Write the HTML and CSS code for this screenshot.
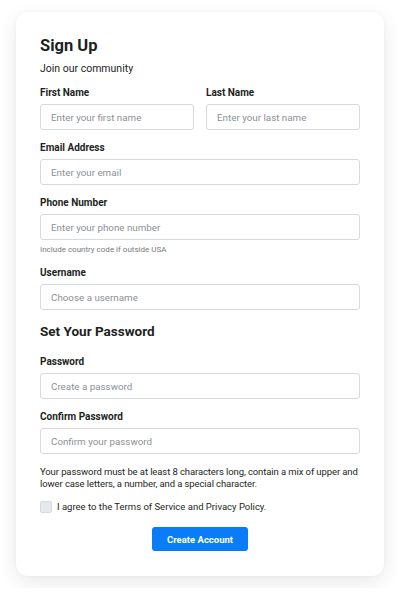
FILE: index.html
```html
<!DOCTYPE html>
<html lang="en">
<head>
  <meta charset="UTF-8">
  <title>Sign Up</title>
  <link rel="stylesheet" href="styles.css">
</head>
<body>
  <form class="signup-card" onsubmit="return false;">
    <h1 class="title">Sign Up</h1>
    <p class="subtitle">Join our community</p>

    <div class="row">
      <div class="field">
        <label for="first-name">First Name</label>
        <input type="text" id="first-name" placeholder="Enter your first name">
      </div>
      <div class="field">
        <label for="last-name">Last Name</label>
        <input type="text" id="last-name" placeholder="Enter your last name">
      </div>
    </div>

    <div class="field">
      <label for="email">Email Address</label>
      <input type="email" id="email" placeholder="Enter your email">
    </div>

    <div class="field">
      <label for="phone">Phone Number</label>
      <input type="tel" id="phone" placeholder="Enter your phone number">
      <small class="hint">Include country code if outside USA</small>
    </div>

    <div class="field">
      <label for="username">Username</label>
      <input type="text" id="username" placeholder="Choose a username">
    </div>

    <h2 class="section-title">Set Your Password</h2>

    <div class="field">
      <label for="password">Password</label>
      <input type="password" id="password" placeholder="Create a password">
    </div>

    <div class="field">
      <label for="confirm">Confirm Password</label>
      <input type="password" id="confirm" placeholder="Confirm your password">
    </div>

    <p class="rules">Your password must be at least 8 characters long, contain a mix of upper and lower case letters, a number, and a special character.</p>

    <label class="agree">
      <input type="checkbox" id="terms">
      <span>I agree to the Terms of Service and Privacy Policy.</span>
    </label>

    <div class="actions">
      <button type="submit" class="submit-btn">Create Account</button>
    </div>
  </form>
</body>
</html>
```

FILE: styles.css
```css
body {
  margin: 0;
  background: #fff;
  font-family: Roboto, 'Noto Sans', Arial, sans-serif;
  color: #1d1f22;
}
.signup-card {
  margin: 12px 16px;
  padding: 24px 24px 25px 24px;
  background: #fff;
  border-radius: 12px;
  box-shadow: 0 6px 20px rgba(0,0,0,0.09), 0 0 4px rgba(0,0,0,0.03);
}
.title {
  margin: 0;
  font-size: 16.5px;
  line-height: 20px;
  font-weight: 700;
}
.subtitle {
  margin: 6px 0 11px 0;
  font-size: 10.5px;
  line-height: 14px;
}
.row {
  display: flex;
  gap: 12px;
}
.row .field {
  flex: 1;
}
.field {
  display: flex;
  flex-direction: column;
  margin-bottom: 12px;
}
.field label {
  font-size: 10px;
  line-height: 12px;
  font-weight: 700;
  margin-bottom: 5px;
}
.field input {
  box-sizing: border-box;
  width: 100%;
  height: 26px;
  padding: 0 10px;
  border: 1px solid #d6d9dd;
  border-radius: 3px;
  font-family: inherit;
  font-size: 9.8px;
  color: #1d1f22;
  background: #fff;
  outline: none;
}
.field input::placeholder {
  color: #8d9196;
}
.hint {
  margin-top: 5px;
  font-size: 8px;
  line-height: 10px;
  color: #777b80;
}
.section-title {
  margin: 13px 0 17px 0;
  font-size: 13.5px;
  line-height: 16px;
  font-weight: 700;
}
.rules {
  margin: 0 0 11px 0;
  font-size: 9.5px;
  line-height: 12px;
  letter-spacing: -0.1px;
}
.agree {
  display: flex;
  align-items: center;
  gap: 5px;
  font-size: 9.5px;
  line-height: 12px;
}
.agree input {
  appearance: none;
  margin: 0;
  width: 12px;
  height: 12px;
  border: 1px solid #d6d9dd;
  border-radius: 2px;
  background: #e6e8eb;
}
.actions {
  display: flex;
  justify-content: center;
  margin-top: 14px;
}
.submit-btn {
  width: 96px;
  height: 24px;
  border: none;
  border-radius: 3px;
  background: #0b7cf7;
  color: #fff;
  font-family: inherit;
  font-size: 9.5px;
  font-weight: 700;
  cursor: pointer;
}
```
